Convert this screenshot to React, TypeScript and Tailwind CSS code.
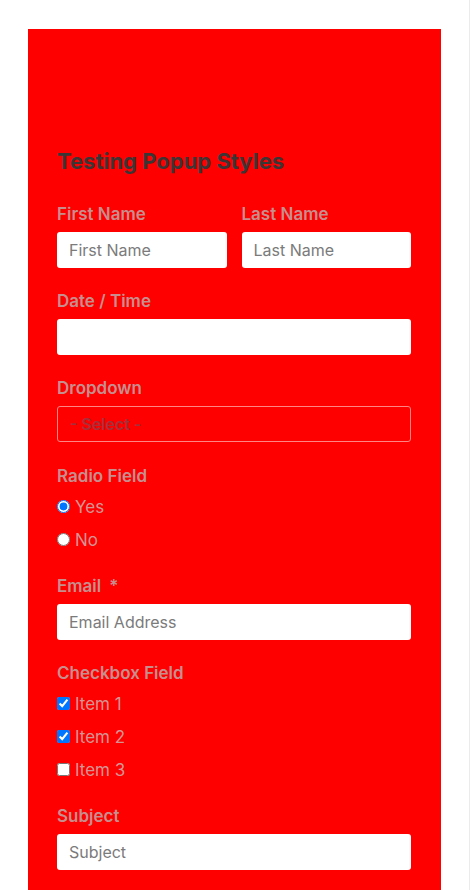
import { useState } from "react";

const labelCls = "block text-[17px] font-semibold leading-[24px] mb-[6px] text-[#c78e8e]";
const inputCls =
  "w-full h-[36px] rounded-[3px] bg-white px-[12px] text-[16px] text-[#333] placeholder:text-[#7b7b7b] outline-none";
const optionCls = "flex items-center h-[26px] gap-[5px] text-[17px] text-[#d49494]";
const tickCls = "w-[13px] h-[13px] mb-[4px]";

const App = () => {
  const [radio, setRadio] = useState("yes");
  const [checks, setChecks] = useState({ a: true, b: true, c: false });

  return (
    <div className="flex min-h-screen bg-white" style={{ fontFamily: "Inter, 'Noto Sans', sans-serif" }}>
      <div className="w-[470px] border-r border-[#ebebeb] pl-[28px] pt-[29px]">
        <div className="w-[413px] bg-[#ff0000] pt-[117px] pl-[29px] pr-[30px] pb-[40px]">
          <h2 className="text-[22px] font-bold leading-[30px] mb-[26px] text-[#3b3636]">Testing Popup Styles</h2>

          <div className="grid grid-cols-2 gap-[15px] mb-[21px]">
            <div>
              <label className={labelCls}>First Name</label>
              <input className={inputCls} placeholder="First Name" />
            </div>
            <div>
              <label className={labelCls}>Last Name</label>
              <input className={inputCls} placeholder="Last Name" />
            </div>
          </div>

          <div className="mb-[21px]">
            <label className={labelCls}>Date / Time</label>
            <input className={inputCls} />
          </div>

          <div className="mb-[22px]">
            <label className={labelCls}>Dropdown</label>
            <select className="w-full h-[36px] appearance-none rounded-[3px] border border-[#ff8585] bg-transparent px-[12px] text-[16px] font-semibold text-[#a3303a] outline-none">
              <option>- Select -</option>
            </select>
          </div>

          <div className="mb-[20px]">
            <label className={labelCls}>Radio Field</label>
            <div className="flex flex-col gap-[7px] pt-[1px]">
              <label className={optionCls}>
                <input type="radio" name="r" checked={radio === "yes"} onChange={() => setRadio("yes")} className={tickCls} />
                Yes
              </label>
              <label className={optionCls}>
                <input type="radio" name="r" checked={radio === "no"} onChange={() => setRadio("no")} className={tickCls} />
                No
              </label>
            </div>
          </div>

          <div className="mb-[21px]">
            <label className={labelCls}>
              Email<span className="ml-[8px]">*</span>
            </label>
            <input className={inputCls} placeholder="Email Address" />
          </div>

          <div className="mb-[20px]">
            <label className={labelCls}>Checkbox Field</label>
            <div className="flex flex-col gap-[7px] pt-[1px]">
              {([
                ["a", "Item 1"],
                ["b", "Item 2"],
                ["c", "Item 3"],
              ] as const).map(([k, t]) => (
                <label key={k} className={optionCls}>
                  <input
                    type="checkbox"
                    checked={checks[k]}
                    onChange={() => setChecks({ ...checks, [k]: !checks[k] })}
                    className={tickCls}
                  />
                  {t}
                </label>
              ))}
            </div>
          </div>

          <div className="mb-[21px]">
            <label className={labelCls}>Subject</label>
            <input className={inputCls} placeholder="Subject" />
          </div>
        </div>
      </div>
    </div>
  );
};

export default App;
